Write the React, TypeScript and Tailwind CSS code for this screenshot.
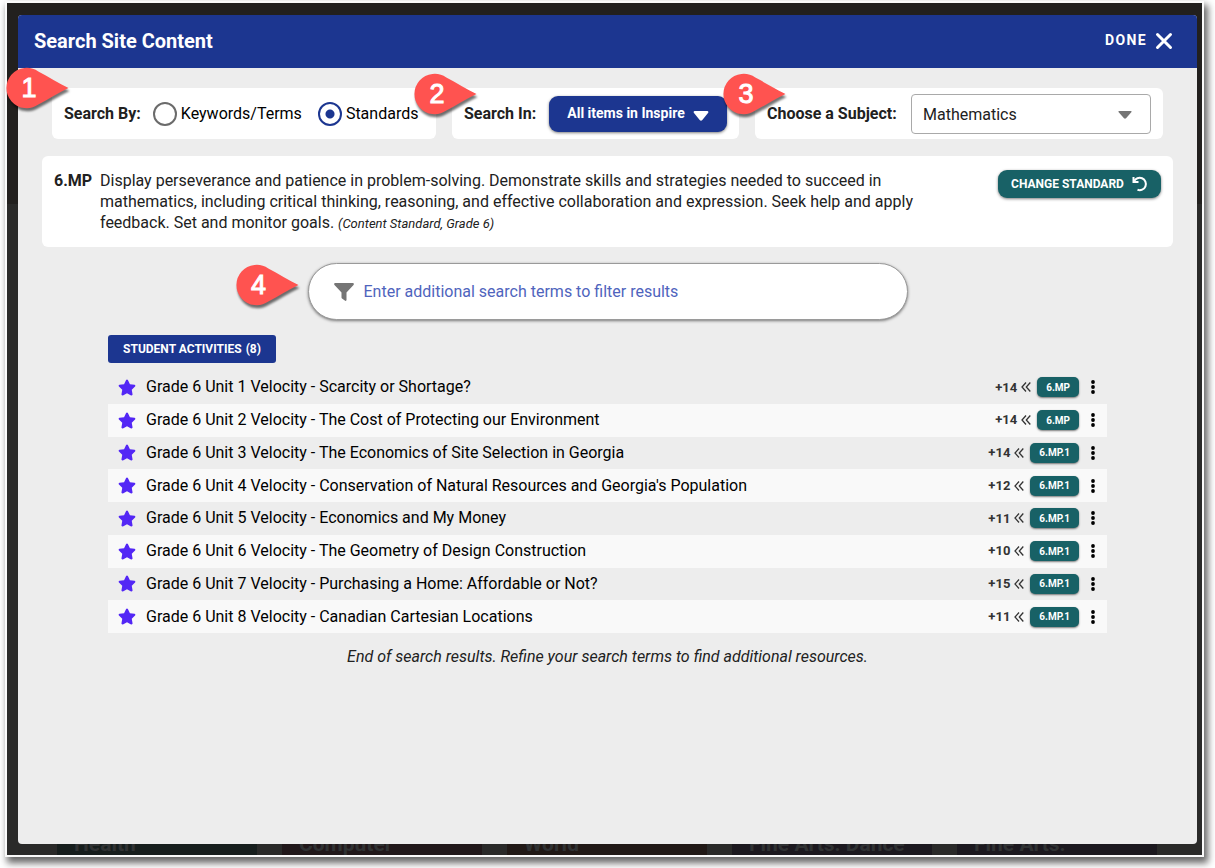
import React from "react";
import { FaStar } from "react-icons/fa";

const tiles = [
  { name: "Health", tone: "bg-[#171e1d]" },
  { name: "Computer", tone: "bg-[#21181a]" },
  { name: "World", tone: "bg-[#211916]" },
  { name: "Fine Arts: Dance", tone: "bg-[#1c191f]" },
  { name: "Fine Arts:", tone: "bg-[#1c191f]" },
];

const activities = [
  { title: "Grade 6 Unit 1 Velocity - Scarcity or Shortage?", more: 14, code: "6.MP" },
  { title: "Grade 6 Unit 2 Velocity - The Cost of Protecting our Environment", more: 14, code: "6.MP" },
  { title: "Grade 6 Unit 3 Velocity - The Economics of Site Selection in Georgia", more: 14, code: "6.MP.1" },
  { title: "Grade 6 Unit 4 Velocity - Conservation of Natural Resources and Georgia's Population", more: 12, code: "6.MP.1" },
  { title: "Grade 6 Unit 5 Velocity - Economics and My Money", more: 11, code: "6.MP.1" },
  { title: "Grade 6 Unit 6 Velocity - The Geometry of Design Construction", more: 10, code: "6.MP.1" },
  { title: "Grade 6 Unit 7 Velocity - Purchasing a Home: Affordable or Not?", more: 15, code: "6.MP.1" },
  { title: "Grade 6 Unit 8 Velocity - Canadian Cartesian Locations", more: 11, code: "6.MP.1" },
];

function Pin({ n, place }: { n: number; place: string }) {
  return (
    <span className={`pointer-events-none absolute z-10 h-[40px] w-[62px] ${place}`}>
      <svg viewBox="0 0 62 40" className="absolute inset-0 h-full w-full overflow-visible drop-shadow-[1px_3px_1px_rgba(0,0,0,0.55)]">
        <path d="M61.500 20C52 15.500 41 8.500 31.300 3.500A20.200 20.200 0 1 0 31.300 36.500C41 31.500 52 24.500 61.500 20Z" fill="#ff5350" />
      </svg>
      <span className="absolute inset-y-0 left-0 flex w-[44px] items-center justify-center font-['Liberation_Sans',sans-serif] text-[27px] text-white [-webkit-text-stroke:1px_white]">
        {n}
      </span>
    </span>
  );
}

function Radio({ label, checked = false }: { label: string; checked?: boolean }) {
  return (
    <label className="flex items-center gap-1 text-black">
      <input
        type="radio"
        name="search-by"
        defaultChecked={checked}
        className="h-6 w-6 appearance-none rounded-full border-2 border-[#6b6b6b] checked:border-[#1c3690] checked:bg-[radial-gradient(circle,#1c3690_4px,transparent_5px)]"
      />
      {label}
    </label>
  );
}

export default function App() {
  return (
    <div className="min-h-screen bg-white pt-[3px] pr-[13px] pb-[13px] pl-[7px] font-['Roboto',sans-serif] text-[#212121]">
      <div className="flex min-h-[852px] flex-col bg-[linear-gradient(#22201e_201px,#2a2a29_201px)] pt-3 pr-[5px] pl-[11px] shadow-[0_0_0_2px_#fafafa,3px_5px_7px_3px_rgba(0,0,0,0.6)]">
        <main className="flex flex-1 flex-col rounded-[4px] bg-[#ededed]">
          <header className="flex h-[53px] items-center justify-between rounded-t-[4px] bg-[#1c3690] pr-6 pb-[2px] pl-4 text-white">
            <h1 className="text-[20px] font-bold">Search Site Content</h1>
            <button className="flex items-center gap-2 text-[14px] font-bold tracking-widest">
              DONE
              <svg viewBox="0 0 18 18" className="h-[18px] w-[18px]" stroke="currentColor" strokeWidth="3" strokeLinecap="round">
                <path d="M2.500 2.500L15.500 15.500M15.500 2.500L2.500 15.500" />
              </svg>
            </button>
          </header>

          <div className="mx-[34px] grid grid-cols-[384fr_287fr_408fr] gap-4 pt-5">
            <fieldset className="relative flex h-[51px] items-center gap-3 rounded-md bg-white px-3">
              <Pin n={1} place="-left-[45px] -top-[20px]" />
              <span className="font-bold">Search By:</span>
              <Radio label="Keywords/Terms" />
              <span className="ml-1">
                <Radio label="Standards" checked />
              </span>
            </fieldset>
            <div className="relative flex h-[51px] items-center justify-between rounded-md bg-white px-3">
              <Pin n={2} place="-left-[37px] -top-[14px]" />
              <span className="font-bold">Search In:</span>
              <button className="flex h-9 w-[178px] items-center justify-center gap-2 rounded-[9px] bg-[#1c3690] text-[14px] font-bold text-white shadow-[0_1px_3px_rgba(0,0,0,0.5)]">
                All items in Inspire
                <svg viewBox="0 0 16 10" className="mt-1 h-[10px] w-4" fill="currentColor">
                  <path d="M1.500 0H14.500Q16 .5 15 2L9.300 9Q8 10.300 6.700 9L1 2Q0 .5 1.500 0Z" />
                </svg>
              </button>
            </div>
            <div className="relative flex h-[51px] items-center justify-between rounded-md bg-white px-3">
              <Pin n={3} place="-left-[31px] -top-[14px]" />
              <label htmlFor="subject" className="font-bold">Choose a Subject:</label>
              <span className="relative">
                <select id="subject" className="h-10 w-60 appearance-none rounded-[4px] border border-[#a9a9a9] bg-white px-[11px] pt-[2px] text-[16px]">
                  <option>Mathematics</option>
                </select>
                <svg viewBox="0 0 14 8" className="pointer-events-none absolute top-[17px] right-[19px] h-2 w-[14px]" fill="#757575">
                  <path d="M1 0H13Q14 .4 13.300 1.300L8 7.300Q7 8.200 6 7.300L.7 1.300Q0 .4 1 0Z" />
                </svg>
              </span>
            </div>
          </div>

          <section className="mx-6 mt-[17px] flex min-h-[91px] items-start rounded-md bg-white px-3 pt-[14px]">
            <strong className="w-[46px] shrink-0 leading-[21px] font-bold">6.MP</strong>
            <p className="max-w-[840px] leading-[21px]">
              Display perseverance and patience in problem-solving. Demonstrate skills and strategies needed to succeed in
              mathematics, including critical thinking, reasoning, and effective collaboration and expression. Seek help and apply
              feedback. Set and monitor goals. <em className="text-[13px]">(Content Standard, Grade 6)</em>
            </p>
            <button className="ml-auto flex h-7 w-[163px] shrink-0 items-center justify-center gap-2 rounded-[9px] bg-[#186166] text-[12px] font-bold text-white shadow-[0_1px_3px_rgba(0,0,0,0.5)]">
              CHANGE STANDARD
              <svg viewBox="0 0 16 16" className="h-4 w-4" fill="none" stroke="currentColor" strokeWidth="2">
                <path d="M1.500 1V6H6.500" />
                <path d="M2 5.500A6.200 6.200 0 1 1 5.500 13.800" />
              </svg>
            </button>
          </section>

          <div className="relative mt-4 flex h-[57px] w-[600px] items-center gap-[10px] self-center rounded-full border border-[#9a9a9a] bg-white pr-6 pl-[25px] shadow-[0_1px_3px_rgba(0,0,0,0.5)]">
            <Pin n={4} place="-left-[72px] top-[1px]" />
            <svg viewBox="0 0 20 18" className="h-[18px] w-5 shrink-0" fill="#757575">
              <path d="M1.200 0H18.800Q20.500 .4 19.500 2L12.500 9.500V17Q12 18.500 10.800 17.600L8 15.500Q7.500 15 7.500 14.500V9.500L.5 2Q-.5 .4 1.200 0Z" />
            </svg>
            <input
              aria-label="Filter results"
              placeholder="Enter additional search terms to filter results"
              className="min-w-0 flex-1 bg-transparent text-[16px] outline-none placeholder:text-[#4f64bd]"
            />
          </div>

          <section className="mx-[90px] mt-[15px]">
            <h2 className="flex h-7 w-[168px] items-center justify-center gap-1 rounded-[3px] bg-[#1c3690] text-[12px] font-bold text-white">
              <span>STUDENT ACTIVITIES</span>
              <span>(8)</span>
            </h2>
            <ul className="mt-2 grid h-[262px] grid-rows-8">
              {activities.map((a) => (
                <li key={a.title} className="flex items-center pr-[11px] pl-[10px] text-black even:bg-[#f9f9f9]">
                  <FaStar className="h-[17px] w-[18px] shrink-0 text-[#5327f5]" />
                  <a href="#" className="ml-[10px] flex-1">{a.title}</a>
                  <span className="text-[13px] font-bold text-[#333333]">+{a.more}</span>
                  <svg viewBox="0 0 10 10" className="mx-1 h-[10px] w-[10px]" fill="none" stroke="#333333" strokeWidth="1.3">
                    <path d="M5 .5L1 5L5 9.500M9.300 .5L5.300 5L9.300 9.500" />
                  </svg>
                  <button className="ml-[2px] h-5 rounded-[5px] bg-[#186166] px-[9px] text-[10px] font-bold text-white shadow-[0_1px_2px_rgba(0,0,0,0.5)]">
                    {a.code}
                  </button>
                  <button aria-label="More options" className="ml-[11px] flex w-[6px] justify-center">
                    <svg viewBox="0 0 4 14" className="h-[14px] w-1">
                      <circle cx="2" cy="2" r="1.900" />
                      <circle cx="2" cy="7" r="1.900" />
                      <circle cx="2" cy="12" r="1.900" />
                    </svg>
                  </button>
                </li>
              ))}
            </ul>
            <p className="mt-3 text-center italic">End of search results. Refine your search terms to find additional resources.</p>
          </section>
        </main>
        <div className="mr-10 ml-[39px] grid h-[11px] grid-cols-5 gap-[25px] overflow-hidden">
          {tiles.map((t) => (
            <div key={t.name} className={`flex items-end overflow-hidden pl-[17px] text-[21px] leading-[22px] font-bold text-[#303233] ${t.tone}`}>
              {t.name}
            </div>
          ))}
        </div>
      </div>
    </div>
  );
}
